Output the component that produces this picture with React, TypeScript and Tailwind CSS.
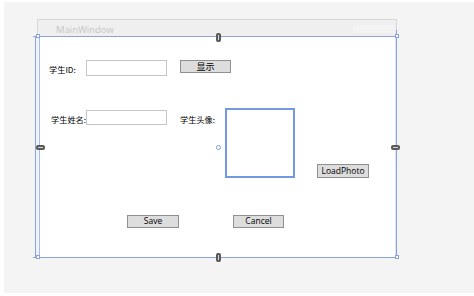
import React from "react";

const cjk = { fontFamily: '"Noto Sans CJK SC", "Noto Sans", sans-serif' };
const latin = { fontFamily: '"Open Sans", "Noto Sans CJK SC", sans-serif' };

function Btn({ children, className }: { children: React.ReactNode; className: string }) {
  return (
    <div
      className={`flex items-center justify-center border border-[#909090] bg-[#dddddd] text-[8.5px] leading-none text-black ${className}`}
      style={latin}
    >
      {children}
    </div>
  );
}

function TextBox({ className }: { className: string }) {
  return <div className={`border border-[#c3c5cb] bg-white ${className}`} />;
}

function VHandle({ className }: { className: string }) {
  return (
    <div className={`absolute w-[5px] h-[9px] rounded-[2px] bg-[#5a5a5a] flex items-center justify-center ${className}`}>
      <div className="w-[1px] h-[5px] bg-[#d5d5d5]" />
    </div>
  );
}

function HHandle({ className }: { className: string }) {
  return (
    <div className={`absolute w-[9px] h-[5px] rounded-[2px] bg-[#5a5a5a] flex items-center justify-center ${className}`}>
      <div className="w-[5px] h-[1px] bg-[#d5d5d5]" />
    </div>
  );
}

export default function App() {
  return (
    <div className="relative w-[474px] h-[296px] overflow-hidden bg-white pt-[2px] pl-[4px] pb-[3px]">
      <div className="h-full w-full bg-[#f4f4f4] pt-[17px] pl-[33px]">
        {/* window */}
        <div className="w-[360px]">
          <div className="flex h-[17px] items-start justify-between border-t border-l border-r border-[#d6d6d6] bg-[#efefef] pl-[18px] pt-[5px] pr-[1px] text-[9.5px] leading-none">
            <span className="text-[#c6c6c6]" style={latin}>
              MainWindow
            </span>
            <div className="h-[8px] w-[42px] bg-[#f3f3f3]" />
          </div>
          <div className="h-[221px] bg-white text-black">
            <div className="flex items-start pt-[24px]">
              <span className="ml-[12px] w-[37px] whitespace-nowrap pt-[3px] text-[8.2px] leading-[12px]" style={cjk}>
                学生ID:
              </span>
              <TextBox className="w-[81px] h-[16px]" />
              <Btn className="ml-[13px] w-[51px] h-[13px]">
                <span className="text-[9px]" style={cjk}>显示</span>
              </Btn>
            </div>
            <div className="flex items-start mt-[32px]">
              <div className="flex items-start mt-[2px]">
                <span className="ml-[14px] w-[35px] whitespace-nowrap pt-[3px] text-[8.2px] leading-[12px]" style={cjk}>
                  学生姓名:
                </span>
                <TextBox className="w-[81px] h-[15px]" />
              </div>
              <span className="ml-[13px] mt-[5px] w-[45px] whitespace-nowrap text-[8.2px] leading-[12px]" style={cjk}>
                学生头像:
              </span>
              <div className="w-[70px] h-[70px] border-2 border-[#7299e2] bg-white" />
              <Btn className="self-end ml-[22px] w-[52px] h-[14px]">LoadPhoto</Btn>
            </div>
            <div className="flex mt-[37px]">
              <Btn className="ml-[90px] w-[52px] h-[13px]">Save</Btn>
              <Btn className="ml-[54px] w-[51px] h-[13px]">Cancel</Btn>
            </div>
          </div>
        </div>
      </div>

      {/* selection frame overlay */}
      <div className="pointer-events-none absolute left-[33px] top-[36px] w-[364px] h-[222px] border-t border-b border-[#8aa3da]">
        <div className="flex h-full">
          <div className="ml-[2px] w-[5px] h-full border-l border-r border-l-[#8aa3da] border-r-[#a9bce6] bg-[#eef2fb]" />
          <div className="flex-1" />
          <div className="w-[2px] h-full border-r border-[#8aa3da] bg-[#dbe3f5]" />
        </div>
      </div>
      <div className="pointer-events-none absolute left-[395px] top-[30px] w-[2px] h-[6px] border-r border-[#8aa3da]" />

      {/* corner squares */}
      <div className="absolute left-[36px] top-[34px] w-[4px] h-[4px] border border-[#8aa3da] bg-white" />
      <div className="absolute left-[395px] top-[34px] w-[4px] h-[4px] border border-[#8aa3da] bg-white" />
      <div className="absolute left-[36px] top-[255px] w-[4px] h-[4px] border border-[#8aa3da] bg-white" />
      <div className="absolute left-[395px] top-[255px] w-[4px] h-[4px] border border-[#8aa3da] bg-white" />

      {/* resize handles */}
      <VHandle className="left-[216px] top-[33px]" />
      <VHandle className="left-[216px] top-[253px]" />
      <HHandle className="left-[36px] top-[145px]" />
      <HHandle className="left-[391px] top-[145px]" />

      {/* small anchor circle */}
      <div className="absolute left-[216px] top-[145px] w-[5px] h-[5px] rounded-full border border-[#7d9cd8] bg-white" />
    </div>
  );
}
